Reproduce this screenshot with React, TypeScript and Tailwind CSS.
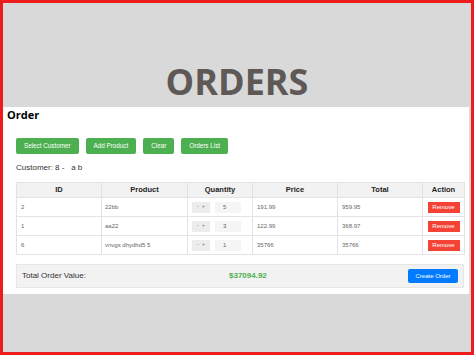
import React from 'react'

interface OrderItem {
  id: number
  product: string
  quantity: number
  price: string
  total: string
}

const items: OrderItem[] = [
  { id: 2, product: '22bb', quantity: 5, price: '191.99', total: '959.95' },
  { id: 1, product: 'aa22', quantity: 3, price: '122.99', total: '368.97' },
  { id: 6, product: 'vnvgs dhydhd5 5', quantity: 1, price: '35766', total: '35766' },
]

const actions = ['Select Customer', 'Add Product', 'Clear', 'Orders List']

export default function App() {
  return (
    <div
      className="w-[474px] h-[355px] border-[3px] border-[#ee1c1c] bg-[#d9d9d9] flex flex-col overflow-hidden"
      style={{ fontFamily: '"Liberation Sans", Arial, sans-serif' }}
    >
      {/* Page title */}
      <div className="h-[104px] flex items-end justify-center pb-[7px]">
        <h1
          className="text-[36px] leading-none font-bold text-[#5e5856]"
          style={{ fontFamily: '"Open Sans", sans-serif' }}
        >
          ORDERS
        </h1>
      </div>

      {/* Order panel */}
      <div className="bg-white mr-[2px] pb-[6px]">
        <h2
          className="text-[11px] leading-[14px] font-bold text-black pl-[4px] pt-[1px]"
          style={{ fontFamily: '"Open Sans", sans-serif' }}
        >
          Order
        </h2>

        <div className="pl-[13px] pr-[5px]">
          <div className="flex gap-[7px] mt-[16px]">
            {actions.map((a) => (
              <button
                key={a}
                className="h-[16px] px-[8px] bg-[#4caf50] text-white text-[6.3px] rounded-[2px]"
              >
                {a}
              </button>
            ))}
          </div>

          <p className="text-[8px] leading-[10px] text-[#333] mt-[9px] whitespace-pre">
            Customer: 8 -   a b
          </p>

          <table className="table-fixed border-collapse mt-[9px] w-[448px] text-[6px] text-[#666]">
            <thead>
              <tr className="bg-[#f2f2f2] h-[15px] text-[7.5px] text-[#222] font-bold">
                <th className="w-[85px] border border-[#e3e3e3]">ID</th>
                <th className="w-[86px] border border-[#e3e3e3]">Product</th>
                <th className="w-[65px] border border-[#e3e3e3]">Quantity</th>
                <th className="w-[85px] border border-[#e3e3e3]">Price</th>
                <th className="w-[85px] border border-[#e3e3e3]">Total</th>
                <th className="w-[42px] border border-[#e3e3e3]">Action</th>
              </tr>
            </thead>
            <tbody>
              {items.map((it) => (
                <tr key={it.id} className="h-[19px]">
                  <td className="border border-[#e3e3e3] px-[4px]">{it.id}</td>
                  <td className="border border-[#e3e3e3] px-[3px]">{it.product}</td>
                  <td className="border border-[#e3e3e3] px-[4px]">
                    <div className="flex items-center">
                      <span className="w-[18px] h-[11px] bg-[#ececec] flex items-center justify-center gap-[3px] text-[5px] text-[#777]">
                        <span>-</span>
                        <span>+</span>
                      </span>
                      <span className="ml-[5px] w-[26px] h-[11px] bg-[#f5f5f5] flex items-center pl-[8px]">
                        {it.quantity}
                      </span>
                    </div>
                  </td>
                  <td className="border border-[#e3e3e3] px-[4px]">{it.price}</td>
                  <td className="border border-[#e3e3e3] px-[4px]">{it.total}</td>
                  <td className="border border-[#e3e3e3]">
                    <div className="flex justify-center">
                      <button className="w-[32px] h-[11px] bg-[#f44336] text-white text-[6px] leading-none">
                        Remove
                      </button>
                    </div>
                  </td>
                </tr>
              ))}
            </tbody>
          </table>

          <div className="mt-[9px] w-[448px] h-[24px] bg-[#f2f2f2] border border-[#e6e6e6] flex items-center pl-[5px] pr-[5px]">
            <span className="text-[8px] text-[#333] w-[207px]">Total Order Value:</span>
            <span className="text-[8px] font-bold text-[#4caf50]">$37094.92</span>
            <button className="ml-auto w-[50px] h-[14px] bg-[#007bff] text-white text-[6px] rounded-[2px]">
              Create Order
            </button>
          </div>
        </div>
      </div>
    </div>
  )
}
